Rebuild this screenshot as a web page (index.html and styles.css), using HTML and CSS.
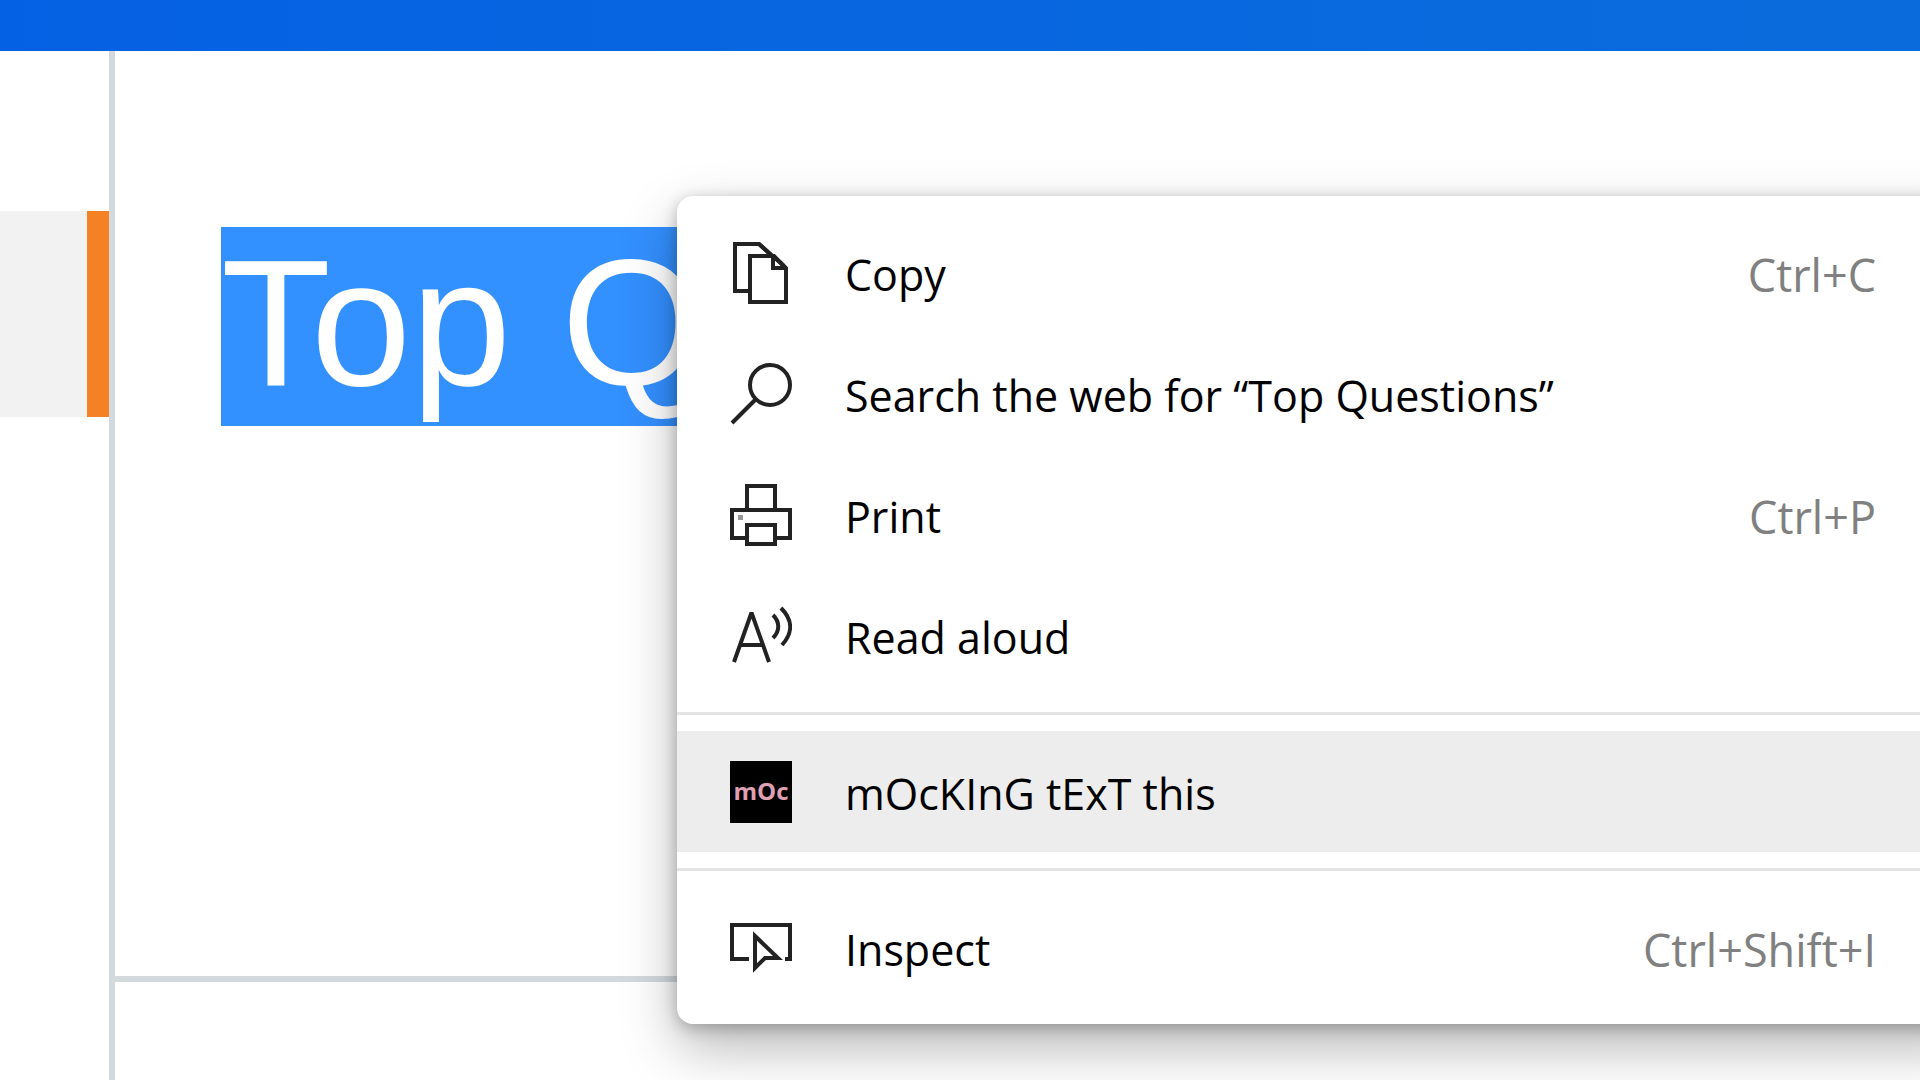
FILE: index.html
```html
<!DOCTYPE html>
<html lang="en">
<head>
    <meta charset="UTF-8">
    <meta name="viewport" content="width=device-width, initial-scale=1.0">
    <title>Top Questions</title>
    <link rel="stylesheet" href="styles.css">
</head>
<body>
    <header class="topbar"></header>
    <div class="layout">
        <nav class="sidebar">
            <div class="sidebar-active"></div>
        </nav>
        <main class="content">
            <div class="heading">
                <h1><span class="selected">Top Questions</span></h1>
            </div>
        </main>
    </div>

    <div class="menu" role="menu">
        <button class="item" role="menuitem">
            <svg class="icon" viewBox="0 0 62 62">
                <path d="M19 49H5V2h24l12 11"/>
                <path d="M20 14h24l12 12v34H20zM43 14v12h13"/>
                <path d="M29 2l25 22"/>
            </svg>
            <span class="label">Copy</span>
            <span class="shortcut">Ctrl+C</span>
        </button>
        <button class="item" role="menuitem">
            <svg class="icon" viewBox="0 0 62 62">
                <circle cx="40" cy="22" r="20"/>
                <path d="M26 36L2 60"/>
            </svg>
            <span class="label">Search the web for “Top Questions”</span>
        </button>
        <button class="item" role="menuitem">
            <svg class="icon" viewBox="0 0 62 62">
                <path d="M17 26V2h28v24"/>
                <path d="M16 54H2V26h58v28H46"/>
                <path d="M17 41h28v19H17z"/>
                <path class="dot" d="M8 31h5v5H8z"/>
            </svg>
            <span class="label">Print</span>
            <span class="shortcut">Ctrl+P</span>
        </button>
        <button class="item" role="menuitem">
            <svg class="icon" viewBox="0 0 62 62">
                <path d="M4 57L21 9h1l17 48M10 40h23"/>
                <path d="M43 10c7 7 7 16 0 23M51 3c12 12 12 25 1 37"/>
            </svg>
            <span class="label">Read aloud</span>
        </button>
        <hr class="separator">
        <button class="item active" role="menuitem">
            <span class="icon badge">mOc</span>
            <span class="label">mOcKInG tExT this</span>
        </button>
        <hr class="separator">
        <button class="item" role="menuitem">
            <svg class="icon" viewBox="0 0 62 62">
                <path d="M19 42H2V8h58v34h-5"/>
                <path d="M25 19v32l10-10h13z"/>
            </svg>
            <span class="label">Inspect</span>
            <span class="shortcut">Ctrl+Shift+I</span>
        </button>
    </div>
</body>
</html>
```

FILE: styles.css
```css
* {
    box-sizing: border-box;
}
body {
    margin: 0;
    height: 100vh;
    display: flex;
    flex-direction: column;
    overflow: hidden;
    background: #fff;
    font-family: "Open Sans", "Noto Sans", sans-serif;
}
.topbar {
    flex: none;
    height: 51px;
    background: linear-gradient(90deg, #0561e3, #0a6cdc);
}
.layout {
    flex: 1;
    display: flex;
}
.sidebar {
    width: 115px;
    padding-top: 160px;
    border-right: 6px solid #d4d9de;
}
.sidebar-active {
    height: 206px;
    background: #f2f2f2;
    border-right: 22px solid #f48225;
}
.content {
    flex: 1;
}
.heading {
    height: 931px;
    padding: 176px 0 0 106px;
    border-bottom: 6px solid #d4d9de;
}
h1 {
    margin: 0;
    font-family: "Liberation Sans", Arial, sans-serif;
    font-size: 180px;
    font-weight: 400;
    line-height: 191px;
    white-space: nowrap;
}
.selected {
    display: inline-block;
    padding-bottom: 8px;
    color: #fff;
    background: #3390ff;
}

/* context menu, runs past the right edge of the window */
.menu {
    position: absolute;
    top: 196px;
    left: 677px;
    right: -60px;
    padding: 16px 0;
    background: #fff;
    border-radius: 16px;
    box-shadow: 0 24px 56px rgba(0, 0, 0, 0.28), 0 4px 16px rgba(0, 0, 0, 0.25);
}
.item {
    display: flex;
    align-items: center;
    width: 100%;
    height: 121px;
    padding: 0 104px 0 53px;
    border: 0;
    background: none;
    color: #000;
    font-family: inherit;
    font-size: 43px;
    text-align: left;
    white-space: nowrap;
}
.item.active {
    background: #ededed;
}
.icon {
    flex: none;
    width: 62px;
    height: 62px;
    margin-right: 53px;
    fill: none;
    stroke: #222;
    stroke-width: 4px;
}
.icon .dot {
    fill: #999;
    stroke: none;
}
.badge {
    background: #000;
    color: #e0a0b4;
    font-size: 24px;
    font-weight: 700;
    line-height: 60px;
    text-align: center;
}
.label {
    flex: 1;
    padding-top: 4px;
}
.shortcut {
    padding-top: 4px;
    color: #808080;
    font-size: 45px;
}
.separator {
    height: 3px;
    margin: 16px 0;
    border: 0;
    background: #e4e4e4;
}
```
